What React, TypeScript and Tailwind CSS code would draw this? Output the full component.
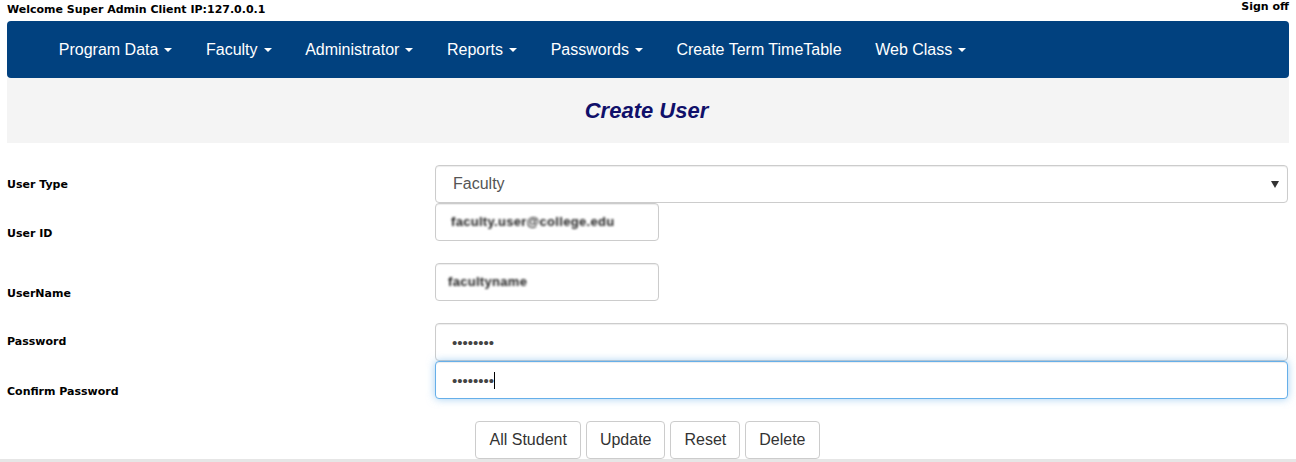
import React from "react";

const Caret = () => (
  <span className="inline-block ml-[6px] align-middle w-0 h-0 border-t-[4px] border-t-white border-x-[4px] border-x-transparent" />
);

const navItems: { label: string; caret: boolean }[] = [
  { label: "Program Data", caret: true },
  { label: "Faculty", caret: true },
  { label: "Administrator", caret: true },
  { label: "Reports", caret: true },
  { label: "Passwords", caret: true },
  { label: "Create Term TimeTable", caret: false },
  { label: "Web Class", caret: true },
];

const labelCls = "text-[11px] font-bold text-black font-['DejaVu_Sans',Verdana,sans-serif] leading-[13px]";
const inputCls =
  "h-[38px] border border-[#ccc] rounded-[4px] bg-white flex items-center px-[12px] shadow-[inset_0_1px_1px_rgba(0,0,0,0.075)]";

export default function App() {
  return (
    <div className="w-[1296px] h-[462px] bg-white overflow-hidden font-['Liberation_Sans',Arial,sans-serif] relative">
      {/* top line */}
      <div className="flex justify-between px-[7px] h-[21px]">
        <div className="pt-[3px] text-[11px] font-bold font-['DejaVu_Sans',Verdana,sans-serif] leading-[13px] text-black">
          Welcome Super Admin Client IP:127.0.0.1
        </div>
        <div className="text-[11px] font-bold font-['DejaVu_Sans',Verdana,sans-serif] leading-[13px] text-black">
          Sign off
        </div>
      </div>

      {/* navbar */}
      <div className="mx-[7px] h-[57px] bg-[#01417f] rounded-[4px] flex items-center pl-[35px]">
        {navItems.map((n) => (
          <div key={n.label} className="px-[16.8px] text-white text-[16px] leading-[20px] whitespace-nowrap">
            {n.label}
            {n.caret && <Caret />}
          </div>
        ))}
      </div>

      {/* title band */}
      <div className="mx-[7px] h-[65px] bg-[#f4f4f4] flex items-center justify-center">
        <h1 className="text-[22px] font-bold italic text-[#10106a] leading-none pr-[3px]">Create User</h1>
      </div>

      {/* form */}
      <div className="px-[7px] pt-[22px] pr-[8px]">
        <div className="flex items-start">
          <div className={`${labelCls} w-[428px] pt-[13px]`}>User Type</div>
          <div className={`${inputCls} flex-1 justify-between pl-[17px] pr-[8px]`}>
            <span className="text-[16px] text-[#555]">Faculty</span>
            <span className="w-0 h-0 border-t-[7px] border-t-[#333] border-x-[4px] border-x-transparent" />
          </div>
        </div>

        <div className="flex items-start">
          <div className={`${labelCls} w-[428px] pt-[24px]`}>User ID</div>
          <div className={`${inputCls} w-[224px] pl-[15px]`}>
            <span className="text-[13px] text-[#222] blur-[1px] tracking-[0.3px] font-bold">faculty.user@college.edu</span>
          </div>
        </div>

        <div className="flex items-start mt-[22px]">
          <div className={`${labelCls} w-[428px] pt-[24px]`}>UserName</div>
          <div className={`${inputCls} w-[224px] pl-[12px]`}>
            <span className="text-[13px] text-[#222] blur-[1px] tracking-[0.3px] font-bold">facultyname</span>
          </div>
        </div>

        <div className="flex items-start mt-[22px]">
          <div className={`${labelCls} w-[428px] pt-[12px]`}>Password</div>
          <div className={`${inputCls} flex-1 pl-[16px]`}>
            <span className="text-[15px] text-[#444] leading-none">••••••••</span>
          </div>
        </div>

        <div className="flex items-start">
          <div className={`${labelCls} w-[428px] pt-[24px]`}>Confirm Password</div>
          <div className="h-[38px] flex-1 border border-[#66afe9] rounded-[4px] bg-white flex items-center pl-[16px] shadow-[inset_0_1px_1px_rgba(0,0,0,0.075),0_0_8px_rgba(102,175,233,0.6)]">
            <span className="text-[15px] text-[#444] leading-none">••••••••</span>
            <span className="inline-block w-px h-[17px] bg-black" />
          </div>
        </div>

        <div className="flex justify-center gap-[5px] mt-[22px]">
          {["All Student", "Update", "Reset", "Delete"].map((b) => (
            <div
              key={b}
              className="h-[38px] px-[13px] border border-[#ccc] rounded-[4px] bg-white flex items-center text-[16px] text-[#333]"
            >
              {b}
            </div>
          ))}
        </div>
      </div>
      <div className="h-[4px] bg-[#e6e6e6]" />
    </div>
  );
}
